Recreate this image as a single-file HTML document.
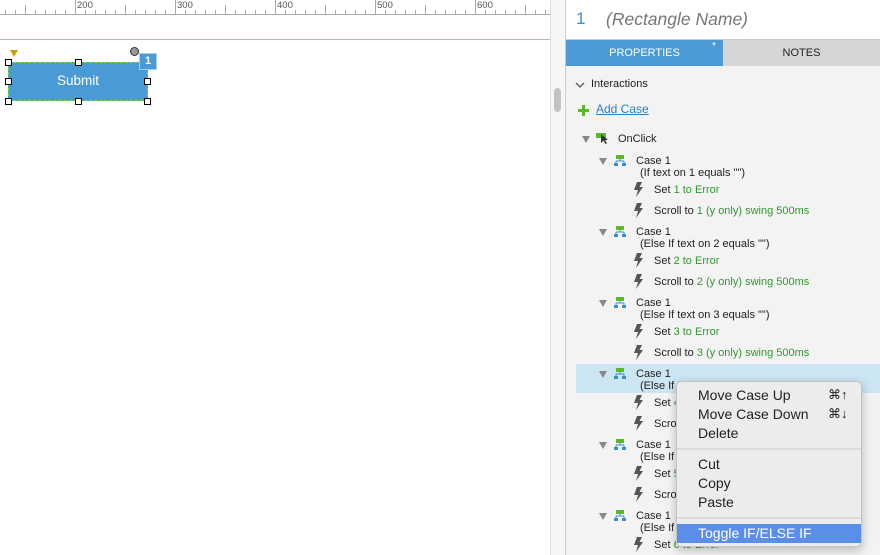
<!DOCTYPE html>
<html><head><meta charset="utf-8"><style>
*{margin:0;padding:0;box-sizing:border-box}
body{width:880px;height:555px;overflow:hidden;background:#fff;font-family:"Liberation Sans",sans-serif;position:relative}
.a{position:absolute;white-space:nowrap}
.t{font-size:11px;color:#222}
.g{color:#2e9a2e}
.tri{position:absolute;width:0;height:0;border-left:4px solid transparent;border-right:4px solid transparent;border-top:7px solid #888}
.h{position:absolute;width:7px;height:7px;border:1px solid #000;background:#fff}
.m{font-size:14px;color:#222;position:absolute;left:21px}
</style></head><body>
<div class="a" style="left:0;top:14px;width:550px;height:1px;background:#aaa"></div>
<svg class="a" style="left:0;top:0" width="550" height="15">
<g stroke="#aaa" stroke-width="1">
<path d="M5.5 10V14M15.5 10V14M25.5 5V14M35.5 10V14M45.5 10V14M55.5 10V14M65.5 10V14M75.5 0V14M85.5 10V14M95.5 10V14M105.5 10V14M115.5 10V14M125.5 5V14M135.5 10V14M145.5 10V14M155.5 10V14M165.5 10V14M175.5 0V14M185.5 10V14M195.5 10V14M205.5 10V14M215.5 10V14M225.5 5V14M235.5 10V14M245.5 10V14M255.5 10V14M265.5 10V14M275.5 0V14M285.5 10V14M295.5 10V14M305.5 10V14M315.5 10V14M325.5 5V14M335.5 10V14M345.5 10V14M355.5 10V14M365.5 10V14M375.5 0V14M385.5 10V14M395.5 10V14M405.5 10V14M415.5 10V14M425.5 5V14M435.5 10V14M445.5 10V14M455.5 10V14M465.5 10V14M475.5 0V14M485.5 10V14M495.5 10V14M505.5 10V14M515.5 10V14M525.5 5V14M535.5 10V14M545.5 10V14"/>
</g>
<g font-size="9.5" fill="#555" font-family="Liberation Sans"><text x="77" y="8">200</text><text x="177" y="8">300</text><text x="277" y="8">400</text><text x="377" y="8">500</text><text x="477" y="8">600</text></g>
</svg>
<div class="a" style="left:0;top:39px;width:550px;height:1px;background:#c9a6ea"></div>
<div class="a" style="left:8px;top:62px;width:140px;height:39px;background:#4a9bd5;border:1px dashed #6fe03a"></div>
<div class="a" style="left:8px;top:73px;width:140px;text-align:center;color:#fff;font-size:13.5px">Submit</div>
<div class="h" style="left:5px;top:59px"></div><div class="h" style="left:75px;top:59px"></div>
<div class="h" style="left:5px;top:78px"></div><div class="h" style="left:144px;top:78px"></div>
<div class="h" style="left:5px;top:98px"></div><div class="h" style="left:75px;top:98px"></div><div class="h" style="left:144px;top:98px"></div>
<div class="a" style="left:10px;top:50px;width:0;height:0;border-left:4px solid transparent;border-right:4px solid transparent;border-top:7px solid #c9a400"></div>
<div class="a" style="left:130px;top:47px;width:9px;height:9px;border-radius:50%;background:#999;border:1px solid #333"></div>
<div class="a" style="left:139px;top:53px;width:18px;height:17px;background:#4a9bd5;border:1px solid #a8d0ee;color:#fff;font-size:11px;font-weight:bold;text-align:center;line-height:15px">1</div>
<div class="a" style="left:550px;top:0;width:16px;height:555px;background:#f6f6f6;border-left:1px solid #e2e2e2;border-right:1px solid #ccc"></div>
<div class="a" style="left:554px;top:88px;width:7px;height:24px;border-radius:4px;background:#c2c2c2"></div>
<div class="a" style="left:566px;top:0;width:314px;height:40px;background:#fff;border-bottom:1px solid #ccc"></div>
<div class="a" style="left:576px;top:9px;font-size:17px;color:#3b8fce">1</div>
<div class="a" style="left:606px;top:9px;font-size:17.5px;color:#777;font-style:italic">(Rectangle Name)</div>
<div class="a" style="left:566px;top:40px;width:157px;height:26px;background:#4a9bd5;color:#fff;font-size:11px;text-align:center;line-height:26px">PROPERTIES</div>
<div class="a" style="left:712px;top:41px;color:#fff;font-size:10px">*</div>
<div class="a" style="left:723px;top:40px;width:157px;height:26px;background:#d6d6d6;color:#222;font-size:11px;text-align:center;line-height:26px">NOTES</div>
<div class="a" style="left:566px;top:66px;width:314px;height:489px;background:#f3f3f3"></div>
<svg class="a" style="left:575px;top:81px" width="10" height="8"><path d="M1 2L5 6L9 2" stroke="#555" fill="none" stroke-width="1.3"/></svg>
<div class="a t" style="left:591px;top:78px">Interactions</div>
<div class="a" style="left:578px;top:109px;width:11px;height:3px;background:#5cb82a"></div>
<div class="a" style="left:582px;top:105px;width:3px;height:11px;background:#5cb82a"></div>
<div class="a" style="left:596px;top:102px;font-size:12px;color:#2a7fc0;text-decoration:underline">Add Case</div>
<div class="tri" style="left:582px;top:136px"></div>
<div class="a" style="left:596px;top:133px;width:10px;height:5px;background:#5cb82a"></div>
<svg class="a" style="left:600px;top:133px" width="10" height="12"><path d="M1 1L1 10L3.5 7.5L5.5 11L7 10.3L5 7L8 7Z" fill="#333"/></svg>
<div class="a t" style="left:618px;top:133px">OnClick</div>
<div class="a" style="left:576px;top:364px;width:304px;height:29px;background:#cde6f3"></div>
<div id="c"></div>
<div class="a" style="left:676px;top:381px;width:186px;height:166px;background:#ececec;border:1px solid #c4c4c4;border-radius:5px;box-shadow:0 3px 10px rgba(0,0,0,.25)">
<div class="m" style="top:5px">Move Case Up</div><div class="a" style="left:151px;top:5px;font-size:13px;color:#222">⌘↑</div>
<div class="m" style="top:24px">Move Case Down</div><div class="a" style="left:151px;top:24px;font-size:13px;color:#222">⌘↓</div>
<div class="m" style="top:43px">Delete</div>
<div class="a" style="left:0;top:66px;width:184px;height:2px;background:#dadada"></div>
<div class="m" style="top:74px">Cut</div>
<div class="m" style="top:93px">Copy</div>
<div class="m" style="top:112px">Paste</div>
<div class="a" style="left:0;top:135px;width:184px;height:2px;background:#dadada"></div>
<div class="a" style="left:0;top:142px;width:184px;height:19px;background:#5a8ee8"></div>
<div class="m" style="top:143px;color:#fff">Toggle IF/ELSE IF</div>
</div>
<script>
var h='',conds=['(If text on 1 equals "")','(Else If text on 2 equals "")','(Else If text on 3 equals "")','(Else If text on 4 equals "")','(Else If text on 5 equals "")','(Else If text on 6 equals "")'];
for(var i=0;i<6;i++){var T=161+71*i,n=i+1;
h+='<div class="tri" style="left:599px;top:'+(T-3)+'px"></div>';
h+='<svg class="a" style="left:613px;top:'+(T-6)+'px" width="14" height="12"><rect x="3" y="0" width="8" height="4" fill="#5cb82a"/><path d="M7 4V6M3 6H11M3 6V8M11 6V8" stroke="#3b8fce" fill="none"/><rect x="1" y="8" width="4" height="3" fill="#3b8fce"/><rect x="9" y="8" width="4" height="3" fill="#3b8fce"/></svg>';
h+='<div class="a t" style="left:636px;top:'+(T-6)+'px">Case 1</div>';
h+='<div class="a t" style="left:640px;top:'+(T+6)+'px">'+conds[i]+'</div>';
var bolt='<path d="M4 0L9 0L6.5 5L10 5L3 15L5 8L1 8Z" fill="#555"/>';
h+='<svg class="a" style="left:633px;top:'+(T+21)+'px" width="12" height="16">'+bolt+'</svg>';
h+='<div class="a t" style="left:654px;top:'+(T+23)+'px">Set <span class="g">'+n+' to Error</span></div>';
if(i<5){h+='<svg class="a" style="left:633px;top:'+(T+42)+'px" width="12" height="16">'+bolt+'</svg>';
h+='<div class="a t" style="left:654px;top:'+(T+44)+'px">Scroll to <span class="g">'+n+' (y only) swing 500ms</span></div>';}
}
document.getElementById('c').innerHTML=h;
</script>
</body></html>
